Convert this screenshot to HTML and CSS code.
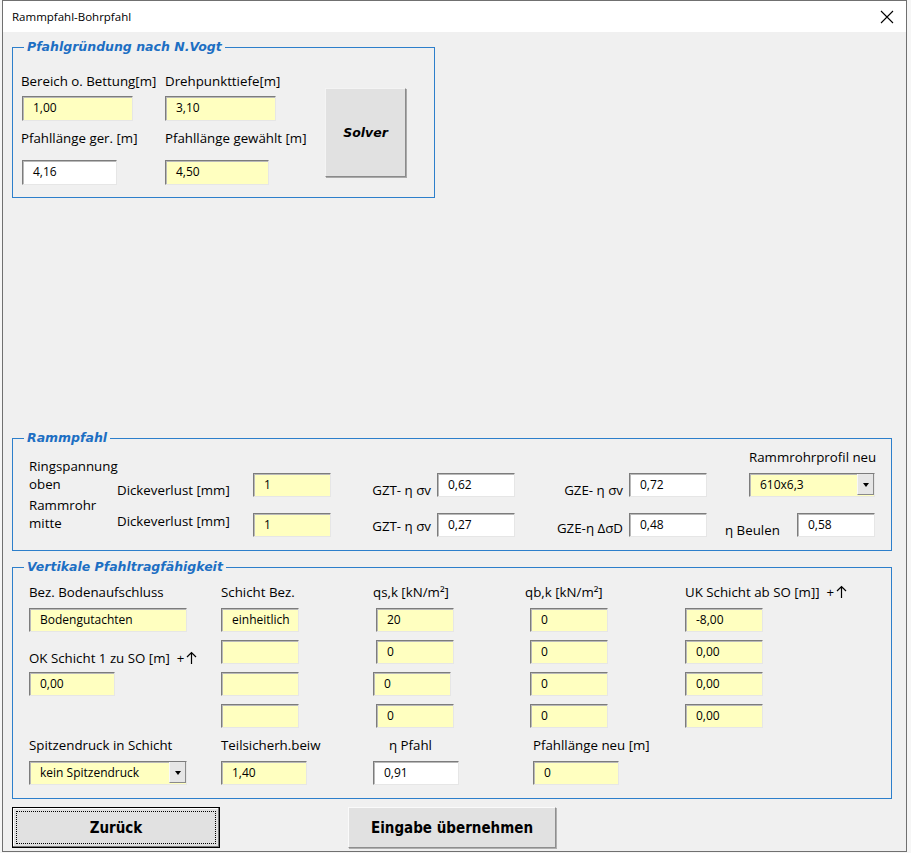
FILE: index.html
```html
<!DOCTYPE html>
<html lang="de">
<head>
  <meta charset="UTF-8">
  <title>Rammpfahl-Bohrpfahl</title>
  <link rel="stylesheet" href="styles.css">
</head>
<body>

  <div class="window">
    <div class="titlebar">
      <span class="title">Rammpfahl-Bohrpfahl</span>
      <svg class="close" width="14" height="14" viewBox="0 0 14 14">
        <path d="M1 1L13 13M13 1L1 13" stroke="#000" stroke-width="1.1" fill="none"/>
      </svg>
    </div>

    <div class="client">

      <!-- Pfahlgruendung -->
      <div class="frame frame-vogt">
        <span class="legend">Pfahlgründung nach N.Vogt</span>
        <div class="vogt-grid">
          <span class="lbl">Bereich o. Bettung[m]</span>
          <span class="lbl">Drehpunkttiefe[m]</span>
          <button class="solver">Solver</button>
          <div class="box yellow w111 ml1 end">1,00</div>
          <div class="box yellow w111 end">3,10</div>
          <span class="lbl end">Pfahllänge ger. [m]</span>
          <span class="lbl end">Pfahllänge gewählt [m]</span>
          <div class="box white w95 ml1 end">4,16</div>
          <div class="box yellow w104 end">4,50</div>
        </div>
      </div>

      <!-- Rammpfahl -->
      <div class="frame frame-ramm">
        <span class="legend">Rammpfahl</span>
        <div class="ramm-grid">
          <span class="lbl two name-top">Ringspannung<br>oben</span>
          <span class="lbl two name-bottom">Rammrohr<br>mitte</span>

          <span class="lbl profil-lbl">Rammrohrprofil neu</span>

          <span class="lbl r2 c2 end">Dickeverlust [mm]</span>
          <div class="box yellow w78 r2 c3 end">1</div>
          <span class="lbl r2 c4 end right">GZT- η σv</span>
          <div class="box white w78 r2 c5 end">0,62</div>
          <span class="lbl r2 c6 end right">GZE- η σv</span>
          <div class="box white w78 r2 c7 end">0,72</div>
          <div class="box yellow combo profil r2 end">610x6,3<span class="drop"></span></div>

          <span class="lbl r3 c2 end up">Dickeverlust [mm]</span>
          <div class="box yellow w78 r3 c3 end">1</div>
          <span class="lbl r3 c4 end right gzt2">GZT- η σv</span>
          <div class="box white w78 r3 c5 end">0,27</div>
          <span class="lbl r3 c6 end right">GZE-η ΔσD</span>
          <div class="box white w78 r3 c7 end">0,48</div>
          <span class="lbl r3 c8 end beulen">η Beulen</span>
          <div class="box white w78 r3 c9 end">0,58</div>
        </div>
      </div>

      <!-- Vertikale Pfahltragfaehigkeit -->
      <div class="frame frame-vert">
        <span class="legend">Vertikale Pfahltragfähigkeit</span>
        <div class="vert-grid">
          <span class="lbl r1 c1">Bez. Bodenaufschluss</span>
          <span class="lbl r1 c2">Schicht Bez.</span>
          <span class="lbl r1 c3">qs,k [kN/m²]</span>
          <span class="lbl r1 c4">qb,k [kN/m²]</span>
          <span class="lbl r1 c5">UK Schicht ab SO [m]]&nbsp; +<svg class="arrow" width="11" height="13" viewBox="0 0 11 13"><path d="M5.5 1.5V13M1 6L5.5 1.5L10 6" stroke="#000" stroke-width="1.2" fill="none"/></svg></span>

          <div class="box yellow w158 r2 c1 end">Bodengutachten</div>
          <div class="box yellow w78 r2 c2 end">einheitlich</div>
          <div class="box yellow w78 r2 c3 end ml3">20</div>
          <div class="box yellow w78 r2 c4 end ml5">0</div>
          <div class="box yellow w78 r2 c5 end">-8,00</div>

          <span class="lbl r3 c1 ok-lbl">OK Schicht 1 zu SO [m]&nbsp; +<svg class="arrow" width="11" height="13" viewBox="0 0 11 13"><path d="M5.5 1.5V13M1 6L5.5 1.5L10 6" stroke="#000" stroke-width="1.2" fill="none"/></svg></span>
          <div class="box yellow w78 r3 c2 end"></div>
          <div class="box yellow w78 r3 c3 end ml3">0</div>
          <div class="box yellow w78 r3 c4 end ml5">0</div>
          <div class="box yellow w78 r3 c5 end">0,00</div>

          <div class="box yellow w86 r4 c1 end">0,00</div>
          <div class="box yellow w78 r4 c2 end"></div>
          <div class="box yellow w78 r4 c3 end">0</div>
          <div class="box yellow w78 r4 c4 end ml5">0</div>
          <div class="box yellow w78 r4 c5 end">0,00</div>

          <div class="box yellow w78 r5 c2 end"></div>
          <div class="box yellow w78 r5 c3 end ml3">0</div>
          <div class="box yellow w78 r5 c4 end ml5">0</div>
          <div class="box yellow w78 r5 c5 end">0,00</div>

          <span class="lbl r6 c1 end">Spitzendruck in Schicht</span>
          <span class="lbl r6 c2 end">Teilsicherh.beiw</span>
          <span class="lbl r6 c3 end ml16">η Pfahl</span>
          <span class="lbl r6 c4 end ml8">Pfahllänge neu [m]</span>

          <div class="box yellow combo w158 r7 c1 end">kein Spitzendruck<span class="drop"></span></div>
          <div class="box yellow w86 r7 c2 end">1,40</div>
          <div class="box white w86 r7 c3 end">0,91</div>
          <div class="box yellow w86 r7 c4 end ml8">0</div>
        </div>
      </div>

      <div class="buttons">
        <button class="btn btn-focus">Zurück</button>
        <button class="btn btn-apply">Eingabe übernehmen</button>
      </div>

    </div>
  </div>

</body>
</html>
```

FILE: styles.css
```css
body {
  margin: 0;
  background: #f6f6f6;
  font-family: "Open Sans", "Noto Sans", sans-serif;
  font-size: 12px;
  color: #000;
}
.window {
  margin-left: 2px;
  width: 903px;
  height: 850px;
  border: 1px solid #707070;
  background: #f0f0f0;
}
.titlebar {
  height: 31px;
  background: #fff;
  display: flex;
  align-items: center;
  justify-content: space-between;
  padding: 0 12px 0 9px;
}
.title {
  font-size: 11.5px;
}
.close {
  margin-top: 1px;
}
.client {
  padding: 15px 0 0 9px;
}

/* frames */
.frame {
  position: relative;
  border: 1px solid #2d7fcb;
}
.legend {
  position: absolute;
  top: -9px;
  left: 11px;
  padding: 0 3px;
  background: #f0f0f0;
  color: #1d6fc3;
  font-family: "DejaVu Sans", sans-serif;
  font-size: 12.5px;
  font-weight: bold;
  font-style: italic;
  line-height: 16px;
}
.frame-vogt {
  width: 413px;
  padding: 24px 0 12px 8px;
  margin-bottom: 240px;
}
.frame-ramm {
  width: 862px;
  padding: 9px 0 13px 16px;
  margin-bottom: 16px;
}
.frame-vert {
  width: 862px;
  padding: 15px 0 13px 16px;
}

/* labels and boxes */
.lbl {
  font-size: 13.3px;
  line-height: 18px;
  white-space: nowrap;
}
.arrow {
  margin-left: 2px;
  vertical-align: -1px;
}
.box {
  box-sizing: border-box;
  height: 24px;
  line-height: 21px;
  padding-left: 10px;
  border: 1px solid;
  border-color: #7c7c7c #e6e6e6 #e6e6e6 #7c7c7c;
  box-shadow: inset 1px 1px 0 #b9b9b9;
  white-space: nowrap;
}
.yellow { background: #ffffc0; }
.white { background: #fff; }
.w78 { width: 78px; }
.w86 { width: 86px; }
.w95 { width: 95px; }
.w104 { width: 104px; }
.w111 { width: 111px; }
.w158 { width: 158px; }
.ml1 { margin-left: 1px; }
.ml3 { margin-left: 3px; }
.ml5 { margin-left: 5px; }
.ml8 { margin-left: 8px; }
.ml16 { margin-left: 16px; }
.end { align-self: end; }
.right { justify-self: end; padding-right: 6px; }

.combo {
  position: relative;
}
.drop {
  position: absolute;
  top: 0;
  right: 0;
  width: 17px;
  height: 21px;
  box-sizing: border-box;
  background: #e6e6e6;
  border-left: 1px solid #f8f8f8;
  border-right: 1px solid #8a8a8a;
  border-bottom: 1px solid #8a8a8a;
}
.drop::after {
  content: "";
  position: absolute;
  left: 5px;
  top: 9px;
  border-left: 3.5px solid transparent;
  border-right: 3.5px solid transparent;
  border-top: 4px solid #000;
}

/* Pfahlgruendung grid */
.vogt-grid {
  display: grid;
  grid-template-columns: 144px 160px 81px;
  grid-template-rows: 18px 31px 26px 38px;
}
.vogt-grid .box {
  height: 25px;
  line-height: 22px;
}
.solver {
  grid-column: 3;
  grid-row: 1 / 5;
  align-self: start;
  margin-top: 16px;
  box-sizing: border-box;
  width: 81px;
  height: 89px;
  background: #e1e1e1;
  border: 1px solid;
  border-color: #f4f4f4 #8a8a8a #8a8a8a #f4f4f4;
  box-shadow: 1px 1px 0 #a9a9a9;
  font-family: "DejaVu Sans", sans-serif;
  font-size: 12.5px;
  font-weight: bold;
  font-style: italic;
  padding: 0;
}

/* Rammpfahl grid */
.ramm-grid {
  display: grid;
  grid-template-columns: 88px 136px 78px 106px 78px 114px 78px 90px 78px;
  grid-template-rows: 18px 31px 40px;
}
.ramm-grid .r2 { grid-row: 2; }
.ramm-grid .r3 { grid-row: 3; }
.ramm-grid .c2 { grid-column: 2; }
.ramm-grid .c3 { grid-column: 3; }
.ramm-grid .c4 { grid-column: 4; }
.ramm-grid .c5 { grid-column: 5; }
.ramm-grid .c6 { grid-column: 6; }
.ramm-grid .c7 { grid-column: 7; }
.ramm-grid .c8 { grid-column: 8; }
.ramm-grid .c9 { grid-column: 9; }
.name-top {
  grid-column: 1;
  grid-row: 1 / 3;
  align-self: end;
  margin-bottom: 4px;
}
.name-bottom {
  grid-column: 1;
  grid-row: 2 / 4;
  align-self: end;
  margin-bottom: 5px;
}
.profil-lbl {
  grid-column: 8 / 10;
  grid-row: 1;
  margin-left: 42px;
}
.profil {
  grid-column: 8 / 10;
  justify-self: end;
  width: 126px;
}
.ramm-grid .r2.lbl { margin-bottom: -2px; }
.ramm-grid .up { margin-bottom: 7px; }
.ramm-grid .gzt2 { margin-bottom: 2px; }
.beulen {
  margin-left: 18px;
  margin-bottom: -2px;
}

/* Vertikale grid */
.vert-grid {
  display: grid;
  grid-template-columns: 192px 152px 152px 160px 1fr;
  grid-template-rows: 18px 31px 32px 32px 32px 26px 31px;
}
.vert-grid .r1 { grid-row: 1; }
.vert-grid .r2 { grid-row: 2; }
.vert-grid .r3 { grid-row: 3; }
.vert-grid .r4 { grid-row: 4; }
.vert-grid .r5 { grid-row: 5; }
.vert-grid .r6 { grid-row: 6; }
.vert-grid .r7 { grid-row: 7; }
.vert-grid .c1 { grid-column: 1; }
.vert-grid .c2 { grid-column: 2; }
.vert-grid .c3 { grid-column: 3; }
.vert-grid .c4 { grid-column: 4; }
.vert-grid .c5 { grid-column: 5; }
.ok-lbl {
  align-self: start;
  margin-top: 17px;
}

/* bottom buttons */
.buttons {
  display: flex;
  gap: 128px;
  margin-top: 8px;
}
.btn {
  width: 208px;
  height: 41px;
  background: #e1e1e1;
  font-family: "DejaVu Sans Condensed", "DejaVu Sans", sans-serif;
  font-size: 15px;
  font-weight: bold;
  padding: 0;
}
.btn-focus {
  border: 1px solid #000;
  box-shadow: inset -1px -1px 0 #7a7a7a, inset 1px 1px 0 #fff;
  outline: 1px dotted #000;
  outline-offset: -5px;
}
.btn-apply {
  border: 1px solid;
  border-color: #fafafa #8e8e8e #8e8e8e #fafafa;
  box-shadow: 1px 1px 0 #b0b0b0;
}
```
